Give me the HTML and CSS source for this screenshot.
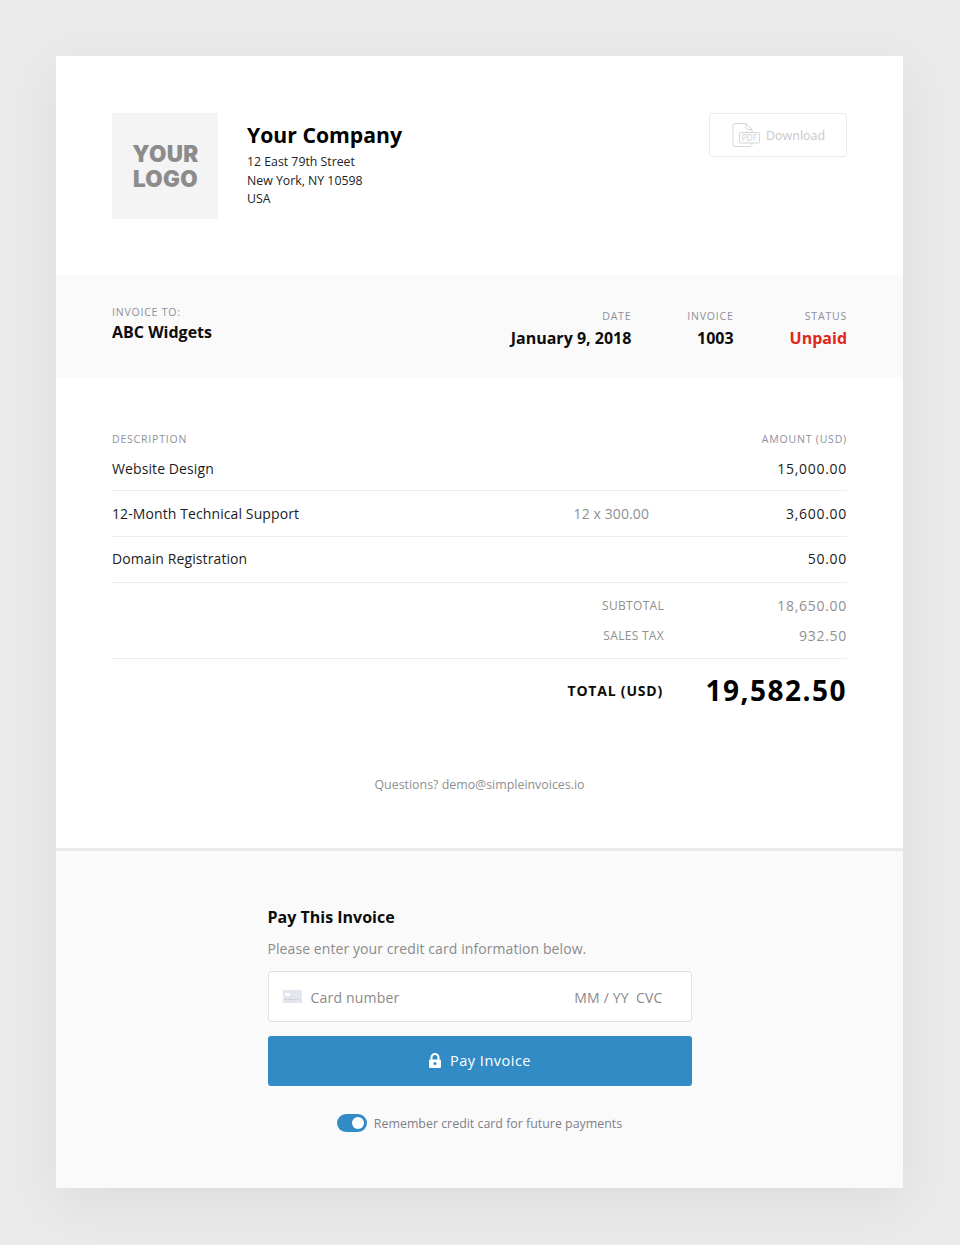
FILE: index.html
```html
<!DOCTYPE html>
<html lang="en">
<head>
  <meta charset="UTF-8" />
  <title>Invoice 1003</title>
  <link rel="stylesheet" href="styles.css">
</head>
<body>
  <div class="invoice">
    <div class="top">
      <div class="logo">YOUR<br>LOGO</div>
      <div class="company">
        <h1>Your Company</h1>
        <p>12 East 79th Street</p>
        <p>New York, NY 10598</p>
        <p>USA</p>
      </div>
      <a class="download">
        <svg width="28" height="26" viewBox="0 0 28 26" fill="none" stroke="#d4d4d4" stroke-width="1">
          <path d="M20 10V7.500L14 1.500H3C1.900 1.500 1 2.400 1 3.500v19c0 1.100.9 2 2 2h15c1.100 0 2-.9 2-2v-1.500"/>
          <path d="M14 1.500v4c0 1.100.9 2 2 2h4"/>
          <rect x="7.500" y="10.500" width="20" height="10.500" rx="1.500" fill="#fff"/>
          <text x="9.500" y="19" class="pdf-text">PDF</text>
        </svg>
        Download
      </a>
    </div>

    <div class="band">
      <div class="bill-to">
        <div class="label">INVOICE TO:</div>
        <div class="strong-value">ABC Widgets</div>
      </div>
      <div class="meta">
        <div class="meta-item">
          <div class="label">DATE</div>
          <div class="strong-value">January 9, 2018</div>
        </div>
        <div class="meta-item">
          <div class="label">INVOICE</div>
          <div class="strong-value">1003</div>
        </div>
        <div class="meta-item">
          <div class="label">STATUS</div>
          <div class="strong-value unpaid">Unpaid</div>
        </div>
      </div>
    </div>

    <div class="items">
      <div class="items-head label">
        <span>DESCRIPTION</span>
        <span>AMOUNT (USD)</span>
      </div>
      <div class="row">
        <span class="desc">Website Design</span>
        <span class="qty"></span>
        <span class="amount">15,000.00</span>
      </div>
      <div class="row">
        <span class="desc">12-Month Technical Support</span>
        <span class="qty">12 x 300.00</span>
        <span class="amount">3,600.00</span>
      </div>
      <div class="row row-last">
        <span class="desc">Domain Registration</span>
        <span class="qty"></span>
        <span class="amount">50.00</span>
      </div>

      <div class="totals">
        <div class="sum-row">
          <span class="sum-label">SUBTOTAL</span>
          <span class="sum-value">18,650.00</span>
        </div>
        <div class="sum-row">
          <span class="sum-label">SALES TAX</span>
          <span class="sum-value">932.50</span>
        </div>
      </div>
      <div class="grand">
        <span class="grand-label">TOTAL (USD)</span>
        <span class="grand-value">19,582.50</span>
      </div>
      <div class="questions">Questions? demo@simpleinvoices.io</div>
    </div>

    <div class="pay">
      <div class="pay-inner">
        <h2>Pay This Invoice</h2>
        <p class="pay-note">Please enter your credit card information below.</p>
        <div class="card-field">
          <svg width="19" height="13" viewBox="0 0 19 13">
            <rect width="19" height="13" rx="1" fill="#e3e6ec"/>
            <rect x="2" y="3" width="5" height="3" fill="#fff"/>
            <path d="M2 9.500h15" stroke="#c9ced8" stroke-width="1" stroke-dasharray="2 1"/>
          </svg>
          <span class="card-number">Card number</span>
          <span class="card-extra">MM / YY</span>
          <span class="card-cvc">CVC</span>
        </div>
        <button class="pay-btn">
          <svg width="14" height="15" viewBox="0 0 14 15">
            <path d="M3.500 7V4.500a3.500 3.500 0 0 1 7 0V7" fill="none" stroke="#fff" stroke-width="2"/>
            <rect x="1" y="6.500" width="12" height="8.500" rx="1.200" fill="#fff"/>
            <circle cx="7" cy="10.500" r="1.500" fill="#338bc6"/>
          </svg>
          Pay Invoice
        </button>
        <div class="remember">
          <span class="toggle"><span class="knob"></span></span>
          Remember credit card for future payments
        </div>
      </div>
    </div>
  </div>
</body>
</html>
```

FILE: styles.css
```css
body {
  margin: 0;
  background: #eaeaea;
  font-family: "Open Sans", sans-serif;
  color: #111;
  padding: 56px 57px 57px 56px;
}
.invoice {
  background: #fff;
  box-shadow: 0 15px 50px rgba(0,0,0,0.06);
}
.top {
  display: flex;
  align-items: flex-start;
  padding: 57px 56px 56px;
}
.logo {
  width: 105px;
  height: 106px;
  padding-left: 1px;
  background: #f4f4f4;
  color: #8c8c8c;
  font-family: Inter, sans-serif;
  font-weight: 900;
  font-size: 22.400px;
  letter-spacing: 0.4px;
  line-height: 25px;
  display: flex;
  align-items: center;
  justify-content: center;
  text-align: center;
}
.company {
  margin-left: 29px;
  flex: 1;
  padding-top: 8px;
}
.company h1 {
  margin: 0 0 4px;
  font-size: 21.200px;
  line-height: 28px;
  font-weight: 700;
  color: #000;
}
.company p {
  margin: 0;
  font-size: 12.300px;
  line-height: 18.500px;
  color: #222;
}
.download {
  width: 114px;
  height: 42px;
  border: 1px solid #ebebeb;
  border-radius: 3px;
  display: flex;
  align-items: center;
  gap: 6px;
  padding-left: 22px;
  font-size: 12.500px;
  color: #c8c8c8;
}
.pdf-text {
  font-family: "Open Sans", sans-serif;
  font-size: 8.500px;
  fill: #cfcfcf;
  stroke: none;
}
.band {
  background: #fafafa;
  height: 102px;
  padding: 0 56px;
  box-sizing: border-box;
  display: flex;
  justify-content: space-between;
}
.label {
  font-size: 10.500px;
  letter-spacing: 0.8px;
  color: #8f8f99;
  line-height: 14px;
}
.strong-value {
  font-size: 16px;
  font-weight: 700;
  color: #0c0c0c;
  line-height: 22px;
}
.unpaid {
  color: #e1261c;
}
.bill-to {
  padding-top: 30px;
}
.bill-to .strong-value {
  margin-top: 2px;
}
.meta {
  display: flex;
  gap: 56px;
  padding-top: 34px;
  text-align: right;
}
.meta .strong-value {
  margin-top: 4px;
}
.items {
  padding: 55px 56px 0;
}
.items-head {
  display: flex;
  justify-content: space-between;
}
.row {
  display: flex;
  align-items: center;
  height: 45px;
  border-bottom: 1px solid #eeeeee;
  font-size: 14px;
  letter-spacing: 0.1px;
  color: #1c1c1c;
}
.row:nth-child(2) {
  height: 44px;
}
.row-last {
  height: 43px;
  padding-bottom: 2px;
}
.desc {
  flex: 1;
}
.qty {
  color: #8f8f8f;
  width: 76px;
  margin-right: 78px;
  text-align: right;
  white-space: nowrap;
}
.amount {
  width: 120px;
  text-align: right;
  letter-spacing: 0.7px;
}
.totals {
  padding: 7px 0 8px;
  border-bottom: 1px solid #eeeeee;
}
.sum-row {
  display: flex;
  justify-content: flex-end;
  align-items: center;
  height: 30px;
}
.sum-label {
  font-size: 12px;
  letter-spacing: 0.3px;
  color: #8f8f8f;
}
.sum-value {
  width: 183px;
  text-align: right;
  font-size: 14px;
  letter-spacing: 0.7px;
  color: #8f8f8f;
}
.grand {
  display: flex;
  justify-content: flex-end;
  align-items: center;
  height: 62px;
  padding-bottom: 2px;
}
.grand-label {
  font-size: 14px;
  font-weight: 700;
  letter-spacing: 0.8px;
  margin-right: 1px;
  color: #0c0c0c;
}
.grand-value {
  width: 183px;
  text-align: right;
  font-size: 28px;
  font-weight: 700;
  letter-spacing: 1.500px;
  color: #000;
}
.questions {
  text-align: center;
  font-size: 12.400px;
  color: #8f8f8f;
  margin-top: 53px;
  padding-bottom: 55px;
}
.pay {
  background: #fafafa;
  border-top: 3px solid #ebebeb;
  height: 337px;
}
.pay-inner {
  width: 424px;
  margin: 0 auto;
  padding-top: 55px;
}
.pay h2 {
  margin: 0;
  font-size: 16px;
  line-height: 22px;
  font-weight: 700;
  color: #0c0c0c;
}
.pay-note {
  margin: 11px 0 12px;
  font-size: 14px;
  letter-spacing: 0.08px;
  line-height: 20px;
  color: #8a8a8a;
}
.card-field {
  height: 51px;
  box-sizing: border-box;
  background: #fff;
  border: 1px solid #e1e1e1;
  border-radius: 3px;
  display: flex;
  align-items: center;
  padding: 2px 28px 0 14px;
  font-size: 14px;
  letter-spacing: 0.2px;
  color: #8a8a8a;
}
.card-field svg {
  margin-top: -3px;
}
.card-number {
  margin-left: 9px;
  flex: 1;
}
.card-cvc {
  margin-left: 7px;
}
.pay-btn {
  display: flex;
  align-items: center;
  justify-content: center;
  gap: 8px;
  width: 100%;
  height: 50px;
  margin-top: 14px;
  padding-bottom: 2px;
  background: #338bc6;
  color: #fff;
  border: none;
  border-radius: 3px;
  font-family: "Open Sans", sans-serif;
  font-size: 14.500px;
  font-weight: 500;
  letter-spacing: 0.5px;
}
.remember {
  display: flex;
  align-items: center;
  justify-content: center;
  gap: 7px;
  margin-top: 28px;
  font-size: 12.400px;
  color: #7f7f88;
}
.toggle {
  width: 30px;
  height: 18px;
  border-radius: 9px;
  background: #338bc6;
  display: flex;
  align-items: center;
  justify-content: flex-end;
  padding-right: 3px;
  box-sizing: border-box;
}
.knob {
  width: 12px;
  height: 12px;
  border-radius: 50%;
  background: #fff;
}
```
